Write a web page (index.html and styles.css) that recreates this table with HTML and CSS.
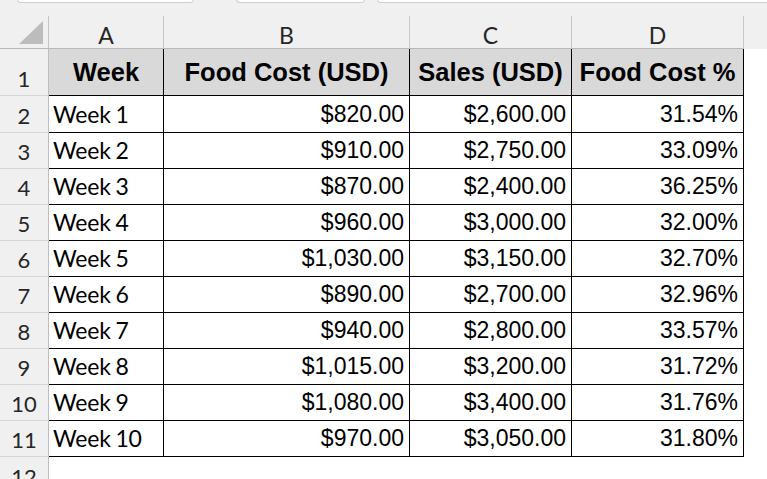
FILE: index.html
```html
<!DOCTYPE html>
<html>
<head>
<meta charset="utf-8">
<link rel="stylesheet" href="styles.css">
</head>
<body>
<div class="topbar">
  <div class="tab tab1"></div>
  <div class="tab tab2"></div>
  <div class="tab tab3"></div>
</div>
<div class="sheet">
  <div class="corner"><svg width="24" height="23" viewBox="0 0 24 23"><polygon points="24,0 24,23 0,23" fill="#bcbcbc"/></svg></div>
  <div class="colhead">A</div>
  <div class="colhead">B</div>
  <div class="colhead">C</div>
  <div class="colhead">D</div>
  <div class="colhead rest"></div>

  <div class="rowhead">1</div>
  <div class="cell hdr">Week</div>
  <div class="cell hdr">Food Cost (USD)</div>
  <div class="cell hdr">Sales (USD)</div>
  <div class="cell hdr">Food Cost %</div>
  <div class="blank"></div>

  <div class="rowhead">2</div><div class="cell txt">Week 1</div><div class="cell num">$820.00</div><div class="cell num">$2,600.00</div><div class="cell num">31.54%</div><div class="blank"></div>
  <div class="rowhead">3</div><div class="cell txt">Week 2</div><div class="cell num">$910.00</div><div class="cell num">$2,750.00</div><div class="cell num">33.09%</div><div class="blank"></div>
  <div class="rowhead">4</div><div class="cell txt">Week 3</div><div class="cell num">$870.00</div><div class="cell num">$2,400.00</div><div class="cell num">36.25%</div><div class="blank"></div>
  <div class="rowhead">5</div><div class="cell txt">Week 4</div><div class="cell num">$960.00</div><div class="cell num">$3,000.00</div><div class="cell num">32.00%</div><div class="blank"></div>
  <div class="rowhead">6</div><div class="cell txt">Week 5</div><div class="cell num">$1,030.00</div><div class="cell num">$3,150.00</div><div class="cell num">32.70%</div><div class="blank"></div>
  <div class="rowhead">7</div><div class="cell txt">Week 6</div><div class="cell num">$890.00</div><div class="cell num">$2,700.00</div><div class="cell num">32.96%</div><div class="blank"></div>
  <div class="rowhead">8</div><div class="cell txt">Week 7</div><div class="cell num">$940.00</div><div class="cell num">$2,800.00</div><div class="cell num">33.57%</div><div class="blank"></div>
  <div class="rowhead">9</div><div class="cell txt">Week 8</div><div class="cell num">$1,015.00</div><div class="cell num">$3,200.00</div><div class="cell num">31.72%</div><div class="blank"></div>
  <div class="rowhead">10</div><div class="cell txt">Week 9</div><div class="cell num">$1,080.00</div><div class="cell num">$3,400.00</div><div class="cell num">31.76%</div><div class="blank"></div>
  <div class="rowhead">11</div><div class="cell txt">Week 10</div><div class="cell num">$970.00</div><div class="cell num">$3,050.00</div><div class="cell num">31.80%</div><div class="blank"></div>

  <div class="rowhead last">12</div><div class="blank"></div><div class="blank"></div><div class="blank"></div><div class="blank"></div><div class="blank"></div>
</div>
</body>
</html>
```
FILE: styles.css
```css
html, body {
  margin: 0;
  padding: 0;
  background: #f0f0f0;
  overflow: hidden;
}
body {
  width: 767px;
  height: 479px;
}
.topbar {
  height: 16px;
  display: flex;
  align-items: flex-start;
  padding-left: 17px;
  gap: 42px;
  box-sizing: border-box;
}
.tab {
  height: 4px;
  margin-top: -1px;
  background: #ffffff;
  border: 1px solid #cfcfcf;
  border-radius: 0 0 5px 5px;
  box-sizing: border-box;
}
.tab1 { width: 177px; }
.tab2 { width: 129px; }
.tab3 { flex: 1; margin-left: -30px; border-right: none; border-radius: 0 0 0 5px; }

.sheet {
  display: grid;
  grid-template-columns: 49px 115px 246px 162px 172px 1fr;
  grid-template-rows: 33px 47px 37px repeat(9, 36px) 36px;
  background: #ffffff;
}
.sheet > div {
  box-sizing: border-box;
  overflow: hidden;
  white-space: nowrap;
}
.corner {
  background: #f0f0f0;
  border-right: 1px solid #c4c4c4;
  border-bottom: 1px solid #b8b8b8;
  display: flex;
  align-items: flex-end;
  justify-content: flex-end;
  padding: 0 5px 4px 0;
}
.corner svg { display: block; }
.colhead {
  background: #f0f0f0;
  border-right: 1px solid #c8c8c8;
  border-bottom: 1px solid #b8b8b8;
  font-family: "Lato", "Liberation Sans", sans-serif;
  font-size: 23px;
  color: #262626;
  text-align: center;
  line-height: 1;
  padding-top: 8px;
}
.colhead.rest {
  border-right: none;
  border-bottom: none;
}
.rowhead {
  background: #f0f0f0;
  border-right: 1px solid #bdbdbd;
  border-bottom: 1px solid #d6d6d6;
  font-family: "Lato", "Liberation Sans", sans-serif;
  font-size: 22px;
  color: #262626;
  display: flex;
  align-items: flex-end;
  justify-content: center;
  line-height: 1;
  padding-bottom: 5px;
}
.rowhead.last { border-bottom: none; }
.cell {
  border-right: 1px solid #000;
  border-bottom: 1px solid #000;
  display: flex;
  align-items: flex-end;
  line-height: 1;
  color: #000;
}
.hdr {
  background: #d9d9d9;
  font-family: "Liberation Sans", Arial, sans-serif;
  font-weight: bold;
  font-size: 25.5px;
  justify-content: center;
  padding-bottom: 10px;
}
.txt {
  font-family: "Lato", "Liberation Sans", sans-serif;
  font-size: 23px;
  letter-spacing: -0.2px;
  word-spacing: -1px;
  padding-left: 4px;
  padding-bottom: 6px;
}
.num {
  font-family: "Liberation Sans", Arial, sans-serif;
  font-size: 23px;
  justify-content: flex-end;
  padding-right: 5px;
  padding-bottom: 6px;
}
.blank {
  background: #ffffff;
}
```
